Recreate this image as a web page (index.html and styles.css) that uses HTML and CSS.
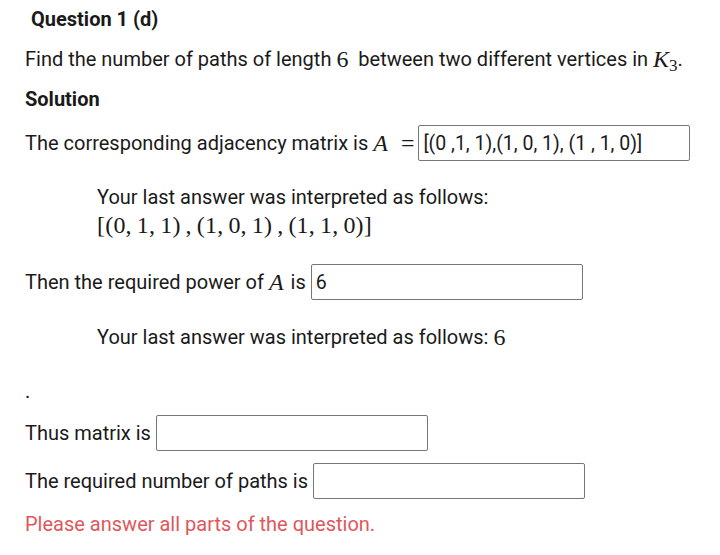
FILE: index.html
```html
<!DOCTYPE html>
<html>
<head>
<meta charset="utf-8">
<link rel="stylesheet" href="styles.css">
</head>
<body>
<div class="page">
  <div class="title">Question 1 (d)</div>
  <div class="row find">Find the number of paths of length&nbsp;<span class="m">6</span>&nbsp; between two different vertices in&nbsp;<span class="m"><i>K</i><sub>3</sub></span>.</div>
  <div class="row sol">Solution</div>
  <div class="row ans r1">The corresponding adjacency matrix is&nbsp;<span class="m"><i>A</i><span class="eq">=</span></span><input class="box" type="text" value="[(0 ,1, 1),(1, 0, 1), (1 , 1, 0)]"></div>
  <div class="interp i1">
    <div class="line">Your last answer was interpreted as follows:</div>
    <div class="line m mline">[(0,&thinsp;1,&thinsp;1)&thinsp;,&thinsp;(1,&thinsp;0,&thinsp;1)&thinsp;,&thinsp;(1,&thinsp;1,&thinsp;0)]</div>
  </div>
  <div class="row ans r2">Then the required power of&nbsp;<span class="m va"><i>A</i></span>&nbsp;is&nbsp;<input class="box" type="text" value="6"></div>
  <div class="interp i2">
    <div class="line">Your last answer was interpreted as follows:&nbsp;<span class="m">6</span></div>
  </div>
  <div class="row dot">.</div>
  <div class="row ans r3">Thus matrix is&nbsp;<input class="box shift" type="text" value=""></div>
  <div class="row ans r4">The required number of paths is&nbsp;<input class="box" type="text" value=""></div>
  <div class="row err">Please answer all parts of the question.</div>
</div>
</body>
</html>
```

FILE: styles.css
```css
html, body {
  margin: 0;
  padding: 0;
  background: #ffffff;
}
body {
  font-family: Roboto, "Liberation Sans", sans-serif;
  font-size: 20px;
  color: #1a1a1a;
}
.page {
  padding-left: 25px;
  display: flex;
  flex-direction: column;
}
.title {
  font-weight: 700;
  font-size: 20px;
  height: 38px;
  line-height: 38px;
  padding-left: 6px;
}
.row {
  display: flex;
  align-items: center;
  white-space: pre;
}
.find { height: 42px; }
.sol { height: 38px; font-weight: 700; }
.ans { height: 50px; }
.r1 { height: 50px; }
.m {
  font-family: "Liberation Serif", "DejaVu Serif", serif;
  font-size: 24px;
}
.m i { font-style: italic; }
.m sub {
  font-size: 17px;
  vertical-align: -4px;
  line-height: 0;
}
.eq {
  margin-left: 13px;
  margin-right: 4px;
}
.va { margin-right: 2px; }
.shift { margin-left: 2px; }
.box {
  box-sizing: border-box;
  width: 272px;
  height: 36px;
  border: 1px solid #767676;
  border-radius: 2px;
  padding: 0 4px;
  margin: 0;
  font-family: Roboto, "Liberation Sans", sans-serif;
  font-size: 19.5px;
  color: #1a1a1a;
  background: #fff;
  outline: none;
}
.interp {
  padding-left: 72px;
  display: flex;
  flex-direction: column;
}
.line {
  height: 28px;
  display: flex;
  align-items: center;
  white-space: pre;
}
.i1 { padding-top: 15px; padding-bottom: 18px; }
.i2 { padding-top: 16px; padding-bottom: 30px; }
.mline { font-size: 24px; letter-spacing: 0.2px; }
.dot { height: 28px; align-items: flex-start; line-height: 20px; }
.r3 { height: 48px; }
.r4 { height: 48px; }
.err {
  color: #e0575b;
  height: 38px;
}
```
